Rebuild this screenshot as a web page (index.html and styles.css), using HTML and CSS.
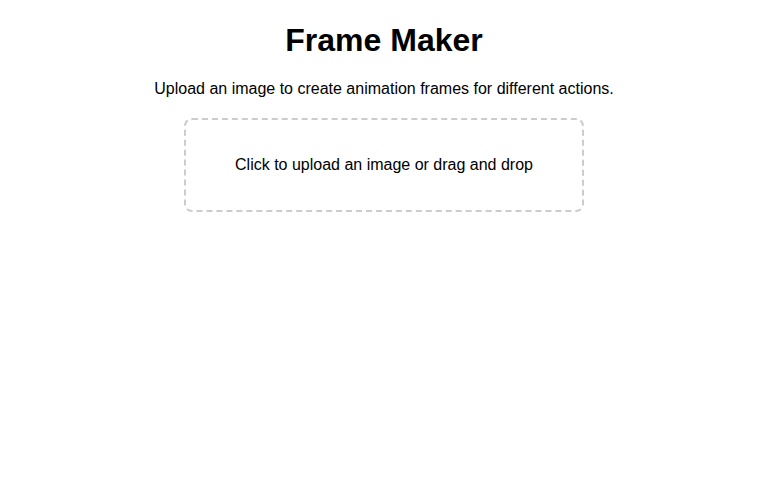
FILE: index.html
```html
<!DOCTYPE html>
<html lang="en">
<head>
    <meta charset="UTF-8">
    <title>Frame Maker</title>
    <meta name="viewport" content="width=device-width, initial-scale=1.0">
    <link rel="stylesheet" href="styles.css">
</head>
<body>
    <div class="container">
        <h1>Frame Maker</h1>
        <p class="intro">Upload an image to create animation frames for different actions.</p>

        <label class="upload-zone" for="imageInput">
            <input type="file" id="imageInput" accept="image/*">
            <span>Click to upload an image or drag and drop</span>
        </label>
    </div>
</body>
</html>
```

FILE: styles.css
```css
body {
    font-family: 'Liberation Sans', Arial, sans-serif;
    color: #000;
    background: #fff;
    margin: 0;
    padding: 22px 20px 20px;
}
.container {
    max-width: 800px;
    margin: 0 auto;
    text-align: center;
}
h1 {
    font-size: 32px;
    margin: 0 0 21px;
}
.intro {
    font-size: 16px;
    margin: 0 0 20px;
}
.upload-zone {
    display: block;
    width: 400px;
    box-sizing: border-box;
    margin: 0 auto;
    padding: 36px 20px;
    border: 2px dashed #ccc;
    border-radius: 8px;
    font-size: 16px;
    line-height: 18px;
    cursor: pointer;
}
.upload-zone input {
    display: none;
}
```
